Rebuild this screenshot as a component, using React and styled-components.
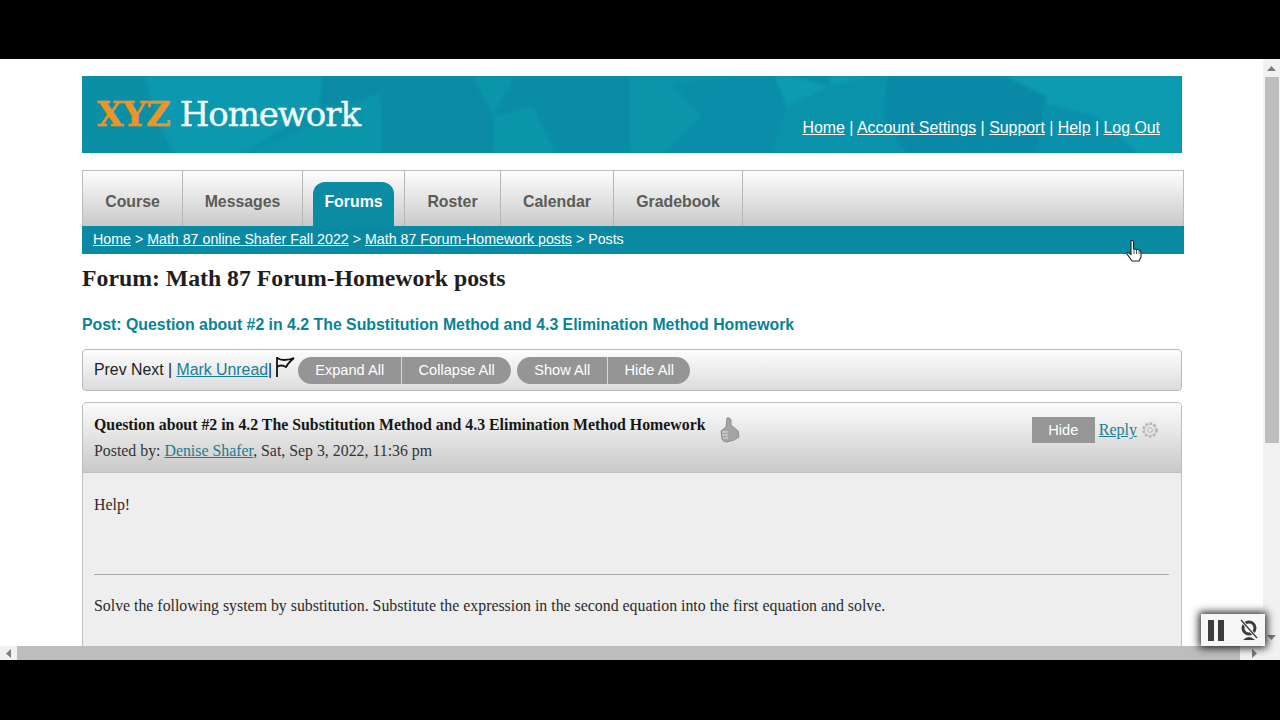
import React from "react";
import styled, { createGlobalStyle } from "styled-components";

const Global = createGlobalStyle`
  html, body { margin: 0; padding: 0; width: 1280px; height: 720px; overflow: hidden; background: #000; }
  body { font-family: "Liberation Sans", Arial, sans-serif; }
  * { box-sizing: border-box; }
`;

const Frame = styled.div`
  position: relative;
  width: 1280px;
  height: 720px;
  background: #000;
  padding-top: 59px;
  overflow: hidden;
`;
const Viewport = styled.div`
  width: 1280px;
  height: 601px;
  display: grid;
  grid-template-columns: 1263px 17px;
  grid-template-rows: 587px 14px;
  background: #fff;
`;
const Page = styled.main`
  overflow: hidden;
  padding: 17px 0 0 82px;
  background: #fff;
`;
const Banner = styled.header`
  position: relative;
  width: 1100px;
  height: 77px;
  background: #0b8fa7;
  display: flex;
  align-items: flex-start;
  justify-content: space-between;
  overflow: hidden;
`;
const BannerArt = styled.svg`
  position: absolute;
  inset: 0;
  filter: blur(1.5px);
`;
const Logo = styled.div`
  position: relative;
  margin: 18px 0 0 15px;
  font-family: "DejaVu Serif", serif;
  font-size: 34px;
  line-height: 40px;
  letter-spacing: -1.1px;
  color: #f2fbfb;
  -webkit-text-stroke: 0.4px #f2fbfb;
  white-space: nowrap;
`;
const LogoMark = styled.span`
  color: #e8952a;
  -webkit-text-stroke: 0.4px #e8952a;
  font-weight: 700;
  letter-spacing: -0.8px;
`;
const UserNav = styled.nav`
  position: relative;
  margin: 42px 22px 0 0;
  font-size: 15.9px;
  line-height: 20px;
  color: #fff;
  white-space: pre;
`;
const LightLink = styled.a`
  color: #fff;
  text-decoration: underline;
`;
const TabBar = styled.nav`
  display: flex;
  width: 1102px;
  height: 56px;
  margin-top: 17px;
  border: 1px solid #bcbcbc;
  border-bottom: 0;
  background: linear-gradient(#fefefe, #c9c9c9);
`;
const Tab = styled.div`
  display: flex;
  align-items: flex-end;
  height: 55px;
  padding: 0 ${(p) => (p.$active ? 10 : 11)}px;
  border-right: 1px solid #b5b5b5;
  &:first-child { padding: 0; }
`;
const TabLabel = styled.a`
  display: flex;
  align-items: center;
  justify-content: center;
  width: ${(p) => p.$w}px;
  height: 44px;
  padding-bottom: 4px;
  border-radius: 12px 12px 0 0;
  font-size: 15.85px;
  font-weight: 700;
  color: ${(p) => (p.$active ? "#fff" : "#5b5b57")};
  background: ${(p) => (p.$active ? "#0b8ca4" : "transparent")};
`;
const Crumbs = styled.div`
  width: 1102px;
  height: 28px;
  padding: 0 0 3px 11px;
  display: flex;
  align-items: center;
  background: #0a8aa2;
  color: #fff;
  font-size: 14.22px;
  white-space: pre;
`;
const Title = styled.h1`
  margin: 11px 0 0;
  font-family: "Liberation Serif", serif;
  font-size: 23.75px;
  line-height: 26px;
  font-weight: 700;
  color: #1e1e1e;
`;
const PostHeading = styled.h2`
  margin: 24px 0 0;
  font-size: 15.85px;
  line-height: 20px;
  font-weight: 700;
  color: #0a8295;
`;
const Toolbar = styled.div`
  display: flex;
  align-items: center;
  width: 1100px;
  height: 42px;
  margin-top: 14px;
  padding-left: 11px;
  border: 1px solid #b9b9b9;
  border-radius: 4px;
  background: linear-gradient(#fdfdfd, #dcdcdc);
  font-size: 15.85px;
  color: #222;
  white-space: pre;
`;
const TealLink = styled.a`
  color: #167f95;
  text-decoration: underline;
`;
const FlagIcon = styled.svg`
  margin: -6px 3px 0 3px;
  flex: none;
`;
const Pill = styled.div`
  display: flex;
  height: 27px;
  margin-right: 6px;
  border-radius: 14px;
  overflow: hidden;
  background: #959595;
`;
const PillButton = styled.button`
  height: 27px;
  width: ${(p) => p.$w}px;
  padding: 0;
  border: 0;
  border-left: ${(p) => (p.$divider ? "1px solid #d6d6d6" : "0")};
  background: transparent;
  color: #fff;
  font-family: inherit;
  font-size: 14.6px;
`;
const Post = styled.article`
  width: 1100px;
  margin-top: 11px;
  border: 1px solid #bdbdbd;
  border-bottom: 0;
  border-radius: 5px 5px 0 0;
  background: #eee;
  font-family: "Liberation Serif", serif;
  overflow: hidden;
`;
const PostHead = styled.div`
  display: flex;
  justify-content: space-between;
  height: 70px;
  padding: 11px 0 0 11px;
  border-bottom: 1px solid #c0c0c0;
  background: linear-gradient(#fcfcfc, #c9c9c9);
`;
const PostMeta = styled.div`
  display: flex;
  flex-direction: column;
  gap: 5px;
`;
const SubjectRow = styled.div`
  display: flex;
  align-items: flex-start;
  height: 21px;
`;
const Subject = styled.strong`
  font-size: 15.85px;
  line-height: 21px;
  color: #161616;
`;
const ThumbIcon = styled.svg`
  margin: 3px 0 0 12px;
  flex: none;
`;
const Byline = styled.div`
  font-size: 15.85px;
  line-height: 21px;
  color: #333;
`;
const PostActions = styled.div`
  display: flex;
  align-items: center;
  height: 26px;
  margin: 3px 22px 0 0;
`;
const HideButton = styled.button`
  width: 63px;
  height: 26px;
  padding: 0;
  border: 0;
  background: #969696;
  color: #fff;
  font-family: "Liberation Sans", sans-serif;
  font-size: 14.6px;
`;
const ReplyLink = styled(TealLink)`
  margin-left: 4px;
  font-size: 16px;
`;
const GearIcon = styled.svg`
  margin-left: 4px;
`;
const PostBody = styled.div`
  padding: 22px 12px 60px 11px;
  font-size: 15.85px;
  line-height: 20px;
  color: #2a2a2a;
`;
const Paragraph = styled.p`
  margin: 0;
`;
const Rule = styled.hr`
  margin: 59px 0 21px;
  border: 0;
  border-top: 1px solid #a9a9a9;
`;
const VBar = styled.div`
  display: flex;
  flex-direction: column;
  background: #f1f1f1;
`;
const VThumb = styled.div`
  height: 366px;
  margin: 0 1px 0 2px;
  background: #bdbdbd;
`;
const ArrowBox = styled.div`
  flex: none;
  display: flex;
  align-items: center;
  justify-content: center;
  height: ${(p) => p.$h}px;
  width: ${(p) => p.$w || "auto"};
  color: #7c7c7c;
  font-size: 0;
`;
const HBar = styled.div`
  display: flex;
  align-items: stretch;
  background: #f1f1f1;
`;
const HThumb = styled.div`
  width: 1223px;
  background: #bdbdbd;
`;
const Corner = styled.div`
  background: #f1f1f1;
`;
const Spacer = styled.div`
  flex: 1;
`;
const Recorder = styled.div`
  position: absolute;
  left: 1201px;
  top: 614px;
  display: flex;
  align-items: center;
  gap: 16px;
  width: 64px;
  height: 32px;
  padding-left: 7px;
  background: #f6f6f6;
  box-shadow: 0 0 8px 2px rgba(0, 0, 0, 0.85);
`;
const Cursor = styled.svg`
  position: absolute;
  left: 1125px;
  top: 239px;
`;

function Tri({ dir }) {
  const d = { up: "M0 5 L4.5 0 L9 5Z", down: "M0 0 L9 0 L4.5 5Z", left: "M5 0 L5 9 L0 4.5Z", right: "M0 0 L0 9 L5 4.5Z" }[dir];
  const vertical = dir === "up" || dir === "down";
  return (
    <svg width={vertical ? 9 : 5} height={vertical ? 5 : 9}>
      <path d={d} fill="currentColor" />
    </svg>
  );
}

const tabs = [
  { label: "Course", w: 99 },
  { label: "Messages", w: 97 },
  { label: "Forums", w: 81, active: true },
  { label: "Roster", w: 73 },
  { label: "Calendar", w: 90 },
  { label: "Gradebook", w: 106 },
];

const shards = [
  ["61,-4 241,-4 238,31 155,81 95,81 78,51", "#0c98ae"],
  ["241,-4 315,-4 295,18 238,31", "#0a8aa5"],
  ["298,16 300,81 158,81 211,58", "#0b95ab"],
  ["300,16 315,-4 388,-4 411,38 411,81 300,81", "#0a8aa5"],
  ["388,-4 435,-4 411,40", "#0b95ab"],
  ["435,-4 548,-4 548,81 475,81 451,31 411,40", "#0a8ca7"],
  ["411,41 451,31 475,81 411,81", "#0b95ab"],
  ["548,-4 691,-4 591,8", "#0b93aa"],
  ["548,-4 591,8 621,41 578,81 548,81", "#0b94aa"],
  ["591,8 688,2 705,31 688,81 578,81 621,41", "#0a8da8"],
  ["691,-4 748,10 705,31", "#0c9bb0"],
  ["705,31 748,10 806,-4 801,41 828,81 688,81", "#0a92ab"],
  ["748,-4 806,-4 748,10", "#0c9bb0"],
  ["806,-4 915,-4 965,21 955,81 828,81 801,41", "#0989a6"],
  ["915,-4 1104,-4 1104,81 955,81 965,21", "#0c9bb0"],
  ["965,28 1015,41 1060,81 955,81", "#0a90aa"],
];

export default function App() {
  return (
    <Frame>
      <Global />
      <Viewport>
        <Page>
          <Banner>
            <BannerArt width="1100" height="77" viewBox="0 0 1100 77">
              {shards.map(([points, fill]) => (
                <polygon key={points} points={points} fill={fill} />
              ))}
            </BannerArt>
            <Logo><LogoMark>XYZ</LogoMark> Homework</Logo>
            <UserNav>
              <LightLink>Home</LightLink>{" | "}<LightLink>Account Settings</LightLink>{" | "}<LightLink>Support</LightLink>{" | "}<LightLink>Help</LightLink>{" | "}<LightLink>Log Out</LightLink>
            </UserNav>
          </Banner>
          <TabBar>
            {tabs.map((t) => (
              <Tab key={t.label} $active={t.active}>
                <TabLabel $w={t.w} $active={t.active}>{t.label}</TabLabel>
              </Tab>
            ))}
          </TabBar>
          <Crumbs>
            <LightLink>Home</LightLink>{" > "}<LightLink>Math 87 online Shafer Fall 2022</LightLink>{" > "}<LightLink>Math 87 Forum-Homework posts</LightLink>{" > Posts"}
          </Crumbs>
          <Title>Forum: Math 87 Forum-Homework posts</Title>
          <PostHeading>Post: Question about #2 in 4.2 The Substitution Method and 4.3 Elimination Method Homework</PostHeading>
          <Toolbar>
            Prev Next | <TealLink>Mark Unread</TealLink>|
            <FlagIcon width="20" height="22" viewBox="0 0 20 22">
              <path d="M2 1 V21 M2 2 Q8 6 19 2 Q13 7 11 11 Q6 8 2 11" fill="none" stroke="#111" strokeWidth="1.8" />
            </FlagIcon>
            <Pill>
              <PillButton $w={103}>Expand All</PillButton>
              <PillButton $w={110} $divider>Collapse All</PillButton>
            </Pill>
            <Pill>
              <PillButton $w={90}>Show All</PillButton>
              <PillButton $w={83} $divider>Hide All</PillButton>
            </Pill>
          </Toolbar>
          <Post>
            <PostHead>
              <PostMeta>
                <SubjectRow>
                  <Subject>Question about #2 in 4.2 The Substitution Method and 4.3 Elimination Method Homework</Subject>
                  <ThumbIcon width="24" height="26" viewBox="0 0 24 26">
                    <path d="M9 1 Q12 0 13 3 L13 8 L20 14 L21 20 L16 23 L9 25 Q5 25 4 22 L3 14 L8 10Z" fill="#a4a4a4" stroke="#8c8c8c" />
                    <path d="M4 15 H10 M4 18 H10 M5 21 H10" stroke="#dedede" strokeWidth="1.2" />
                  </ThumbIcon>
                </SubjectRow>
                <Byline>Posted by: <TealLink>Denise Shafer</TealLink>, Sat, Sep 3, 2022, 11:36 pm</Byline>
              </PostMeta>
              <PostActions>
                <HideButton>Hide</HideButton>
                <ReplyLink>Reply</ReplyLink>
                <GearIcon width="18" height="18" viewBox="0 0 18 18">
                  <circle cx="9" cy="9" r="6.5" fill="none" stroke="#b4b4b4" strokeWidth="2.4" strokeDasharray="2.6 1.6" />
                  <circle cx="9" cy="9" r="5.4" fill="none" stroke="#c4c4c4" />
                  <circle cx="9" cy="9" r="2.4" fill="none" stroke="#b4b4b4" />
                </GearIcon>
              </PostActions>
            </PostHead>
            <PostBody>
              <Paragraph>Help!</Paragraph>
              <Rule />
              <Paragraph>Solve the following system by substitution. Substitute the expression in the second equation into the first equation and solve.</Paragraph>
            </PostBody>
          </Post>
        </Page>
        <VBar>
          <ArrowBox $h={18}><Tri dir="up" /></ArrowBox>
          <VThumb />
          <Spacer />
          <ArrowBox $h={18}><Tri dir="down" /></ArrowBox>
        </VBar>
        <HBar>
          <ArrowBox $h={14} $w="17px"><Tri dir="left" /></ArrowBox>
          <HThumb />
          <Spacer />
          <ArrowBox $h={14} $w="17px"><Tri dir="right" /></ArrowBox>
        </HBar>
        <Corner />
      </Viewport>
      <Cursor width="18" height="24" viewBox="0 0 18 24">
        <path d="M6 1.5 Q8 0.5 8.5 3 V10 L12 10.5 Q16 11 16 14 V18 L14 22 H7 L2 15 Q1.5 13 4 14 L6 15.5Z" fill="#fff" stroke="#222" strokeWidth="1.1" />
        <path d="M9 11 V15 M11.5 11 V15 M14 12 V15" stroke="#222" strokeWidth="0.8" />
      </Cursor>
      <Recorder>
        <svg width="16" height="21" viewBox="0 0 16 21"><path d="M0 0H6V21H0ZM10 0H16V21H10Z" fill="#3c3c3c" /></svg>
        <svg width="18" height="22" viewBox="0 0 18 22">
          <circle cx="9" cy="9" r="6" fill="none" stroke="#3c3c3c" strokeWidth="3" />
          <path d="M3 21 Q9 15 15 21Z" fill="#3c3c3c" />
          <path d="M1 1 L17 19" stroke="#f6f6f6" strokeWidth="3" />
          <path d="M1 1 L17 19" stroke="#3c3c3c" strokeWidth="1.3" />
        </svg>
      </Recorder>
    </Frame>
  );
}
